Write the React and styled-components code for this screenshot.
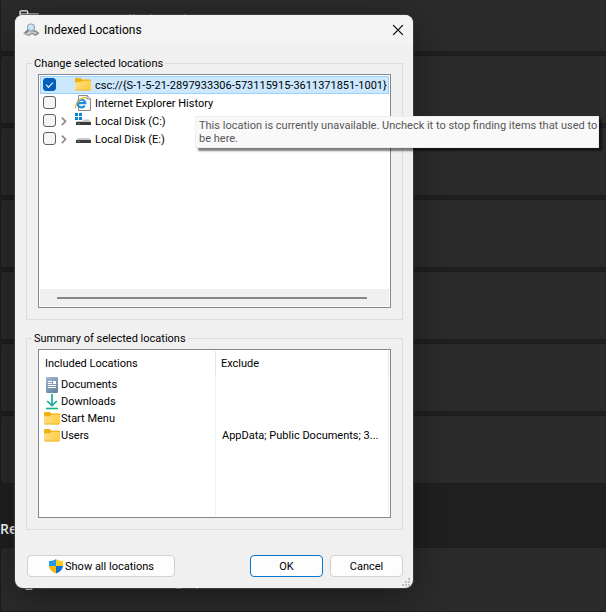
import React from "react"
import styled, { createGlobalStyle, css } from "styled-components"

const GlobalStyle = createGlobalStyle`
  *, *::before, *::after {
    box-sizing: border-box;
  }

  body {
    margin: 0;
    background: #202020;
    font-family: Roboto, "Liberation Sans", sans-serif;
    font-size: 11px;
    line-height: 15px;
    color: #000;
  }
`

/* settings page behind the dialog */

const Desktop = styled.div`
  position: relative;
  height: 100vh;
  min-height: 600px;
  overflow: hidden;
  background: #202020;
`

const SettingsPage = styled.main`
  display: flex;
  flex-direction: column;
  margin: -17px -8px 0 0;
  font-family: "Open Sans", "Noto Sans", sans-serif;
  font-size: 14px;
  line-height: 20px;
  color: #fff;
`

const CardList = styled.div`
  display: flex;
  flex-direction: column;
  gap: 3px;
`

const Card = styled.div`
  display: flex;
  align-items: center;
  gap: 21px;
  height: ${p => (p.$short ? "65px" : "69px")};
  flex: none;
  padding: ${p => (p.$short ? "0" : "4px")} 0 0 18px;
  background: #2b2b2b;
  border: 1px solid #1d1d1d;
  border-radius: 4px;
`

const SectionTitle = styled.h2`
  margin: 35px 0 8px;
  font-size: 14px;
  line-height: 20px;
  font-weight: 600;
`

/* dialog */

const Window = styled.section`
  position: absolute;
  top: 15px;
  left: 15px;
  width: 398px;
  max-width: 100%;
  background: #f0f0f0;
  border-radius: 8px;
  box-shadow: 0 0 0 1px rgba(70, 70, 70, 0.7), 0 8px 36px rgba(0, 0, 0, 0.4);
`

const TitleBar = styled.header`
  display: flex;
  align-items: center;
  gap: 5px;
  height: 30px;
  padding: 0 9px 0 8px;
  background: #f3f3f3;
  border-radius: 8px 8px 0 0;
`

const Title = styled.h1`
  flex: 1;
  margin: 0;
  font-size: 12px;
  line-height: 16px;
  font-weight: 400;
`

const CloseButton = styled.button`
  display: flex;
  padding: 0;
  border: 0;
  background: none;
  color: #000;
`

const Content = styled.div`
  display: flex;
  flex-direction: column;
  gap: 11px;
  padding: 11px 10px 11px 11px;
`

const Group = styled.fieldset`
  min-width: 0;
  margin: 0;
  padding: 3px 11px 11px;
  border: 1px solid #dcdcdc;
`

const Legend = styled.legend`
  margin-left: -6px;
  padding: 0 2px;
`

const ListBox = styled.div`
  display: flex;
  flex-direction: column;
  min-height: ${p => p.$height};
  padding: 1px;
  background: #fff;
  border: 1px solid #828790;
`

const Tree = styled.ul`
  flex: 1;
  margin: 0;
  padding: 0;
  list-style: none;
`

const TreeItem = styled.li`
  display: flex;
  align-items: center;
  height: 18px;
  padding-left: 2px;
  border: 1px solid transparent;
  white-space: nowrap;

  ${p =>
    p.$selected &&
    css`
      background: #cce8ff;
      border-color: #99d1ff;
    `}
`

const Checkbox = styled.input`
  appearance: none;
  display: grid;
  place-items: center;
  width: 13px;
  height: 13px;
  margin: 0 0 1px;
  background: #f5f5f5;
  border: 1px solid #5f5f5f;
  border-radius: 3px;

  &:checked {
    background: #005fb8;
    border-color: #005fb8;
  }

  &:checked::after {
    content: "";
    width: 7px;
    height: 4px;
    border: solid #fff;
    border-width: 0 0 1px 1px;
    transform: translateY(-1px) rotate(-45deg);
  }
`

const Expander = styled.button`
  display: flex;
  justify-content: center;
  width: 15px;
  margin-right: 4px;
  padding: 0;
  border: 0;
  background: none;
`

const ExpanderGap = styled.span`
  width: 19px;
`

const ItemLabel = styled.label`
  display: flex;
  align-items: center;
  gap: 4px;
`

const ScrollTrack = styled.div`
  display: flex;
  align-items: center;
  height: 17px;
  padding: 0 22px 0 17px;
  background: #f0f0f0;
`

const ScrollThumb = styled.div`
  flex: 1;
  height: 2px;
  background: #858585;
`

const Summary = styled.table`
  width: 100%;
  height: 165px;
  table-layout: fixed;
  border-collapse: separate;
  border-spacing: 0;
`

const HeadCell = styled.th`
  width: ${p => p.$width || "auto"};
  height: 25px;
  padding: 0 5px;
  border-right: 1px solid #e5e5e5;
  text-align: left;
  font-weight: 400;
`

const Cell = styled.td`
  height: ${p => (p.$filler ? "auto" : "17px")};
  padding: 0 5px 0 ${p => (p.$first ? "4px" : "6px")};
  border-right: 1px solid #e8f2fc;
  overflow: hidden;
  text-overflow: ellipsis;
  white-space: nowrap;
`

const Location = styled.span`
  display: flex;
  align-items: center;
  gap: 1px;
`

const Footer = styled.footer`
  display: flex;
  gap: 7px;
  margin-top: 14px;
  padding-left: 1px;
`

const Button = styled.button`
  display: flex;
  align-items: center;
  justify-content: center;
  gap: 1px;
  width: ${p => (p.$wide ? "148px" : "73px")};
  height: 22px;
  margin-right: ${p => (p.$wide ? "auto" : "0")};
  padding: 0;
  font: inherit;
  color: #000;
  background: #fdfdfd;
  border: 1px solid ${p => (p.$primary ? "#0078d4" : "#d0d0d0")};
  border-radius: 4px;
`

const Grip = styled.svg`
  position: absolute;
  right: 3px;
  bottom: 2px;
`

const Tooltip = styled.div`
  position: absolute;
  top: 116px;
  left: 195px;
  width: 404px;
  padding: 3px 0 3px 4px;
  line-height: 13px;
  color: #575757;
  background: #f9f9f9;
  border-radius: 1px;
  box-shadow: inset 0 0 0 1px #ececec, 3px 3px 2px rgba(0, 0, 0, 0.5);
`

/* icons */

const Icon = ({ size = 16, children, ...rest }) => (
  <svg width={size} height={size} viewBox="0 0 16 16" fill="none" aria-hidden="true" {...rest}>
    {children}
  </svg>
)

const FolderIcon = () => (
  <Icon>
    <path d="M0 2.200C0 1.400.5 1 1.200 1h4.600l1.400 1.600h7.600c.7 0 1.200.5 1.200 1.200V8H0z" fill="#f0b010" />
    <path d="M0 5.200h6l1.600-1.400h7.400c.6 0 1 .4 1 1v7.500c0 .7-.5 1.200-1.200 1.200H1.200C.5 13.500 0 13 0 12.300z" fill="url(#folderFace)" />
    <path d="M.5 13h15" stroke="#e9b32f" strokeWidth=".8" />
    <defs>
      <linearGradient id="folderFace" x1="0" y1="4" x2="16" y2="14" gradientUnits="userSpaceOnUse">
        <stop stopColor="#ffe08a" />
        <stop offset="1" stopColor="#ffca3a" />
      </linearGradient>
    </defs>
  </Icon>
)

const InternetIcon = () => (
  <Icon>
    <path d="M3.500.5h8.700l3.300 3.300v11.700h-12z" fill="#fcfcfc" stroke="#8a8a8a" />
    <path d="M12 .5V4h3.500" stroke="#8a8a8a" />
    <path d="M9.700 10.600a3.900 3.900 0 1 1 .6-2.500H3" stroke="#1e8fe0" strokeWidth="2.200" />
    <path d="M1.200 13.400C-1 11.500 2.600 5.600 6.600 3.400c2.300-1.300 4.300-1.400 4.500.3" stroke="#f0b41c" strokeWidth="1.100" />
  </Icon>
)

const DiskIcon = ({ windows }) => (
  <Icon>
    {windows && <path d="M0 0h3v3H0zM4 0h3v3H4zM0 4h3v3H0zM4 4h3v3H4z" fill="#0a84d8" />}
    <path d={windows ? "M8 6.500h6l2 2.500H1l1-1h6z" : "M3 7h11l2 2H1z"} fill="#c9c9c9" />
    <rect x="1" y="9" width="15" height="3" rx=".6" fill="#3a3a3a" />
    <rect x="3" y="10" width="1.500" height="1" fill="#35d32f" />
  </Icon>
)

const DocumentIcon = () => (
  <Icon>
    <rect x="2" y="0" width="12" height="16" rx="1.200" fill="url(#docFace)" />
    <path d="M4 4.500h4M4 6.500h4M4 8.500h8M4 10.500h8" stroke="#fff" />
    <rect x="9" y="4" width="3" height="3" fill="#fff" />
    <defs>
      <linearGradient id="docFace" x1="2" y1="0" x2="14" y2="16" gradientUnits="userSpaceOnUse">
        <stop stopColor="#9fb9d3" />
        <stop offset="1" stopColor="#5f7f9f" />
      </linearGradient>
    </defs>
  </Icon>
)

const DownloadIcon = () => (
  <Icon>
    <path d="M8 0v11.500M3.200 7 8 11.600 12.800 7" stroke="#1aab97" strokeWidth="1.700" />
    <path d="M2 14.500h12" stroke="#17b384" strokeWidth="1.600" />
  </Icon>
)

const ShieldIcon = () => (
  <Icon>
    <path d="M8 1C6 2.500 3.500 3 1 3v5h7z" fill="#1f9be8" />
    <path d="M8 1c2 1.500 4.500 2 7 2v5H8z" fill="#ffcc1a" />
    <path d="M1 8c.3 3.500 3 6 7 7.500V8z" fill="#f8b90c" />
    <path d="M15 8c-.3 3.500-3 6-7 7.500V8z" fill="#1273cf" />
  </Icon>
)

const IndexIcon = () => (
  <Icon>
    <path d="M0 11.500 4 8h8l4 2.500v1.300L12.500 14 9 12l-3.500 2z" fill="#8d8d8d" />
    <path d="M1.200 11.300 4.500 9l6 .6 4 1.300-2.300 1.400L9 10.600l-3.500 2.200z" fill="#cfcfcf" />
    <circle cx="8" cy="5.500" r="3.500" fill="#bfe3fb" stroke="#9aa6b0" strokeWidth="1.200" />
    <path d="M6.200 5C6.500 4 7.200 3.600 8 3.500" stroke="#fff" />
    <path d="m5.400 8-2.800 3" stroke="#777" strokeWidth="1.800" />
  </Icon>
)

const CloseIcon = () => (
  <Icon size={12}>
    <path d="m1.500 1.500 13 13m0-13-13 13" stroke="currentColor" strokeWidth="1.600" />
  </Icon>
)

const ChevronIcon = () => (
  <Icon size={10}>
    <path d="m4.500 2.500 6 6-6 6" stroke="#8a8a8a" strokeWidth="2.600" />
  </Icon>
)

const OutlineFolder = () => (
  <Icon size={20}>
    <path d="M.8 13.500v-12c0-.5.400-.8.800-.8h4.500c.5 0 .8.300.8.800v1.700H15.200v10.300zM.8 3.200h6" stroke="#fff" />
  </Icon>
)

const OutlineBulb = () => (
  <Icon size={20}>
    <path d="M5.800 11.500C3 9.500 2.700 7.500 2.700 6a5.300 5.300 0 0 1 10.600 0c0 1.500-.3 3.500-3.100 5.500v3.800H5.800zM5.800 12.500h4.400" stroke="#fff" />
  </Icon>
)

const locations = [
  { name: "csc://{S-1-5-21-2897933306-573115915-3611371851-1001}", icon: <FolderIcon />, checked: true },
  { name: "Internet Explorer History", icon: <InternetIcon /> },
  { name: "Local Disk (C:)", icon: <DiskIcon windows />, expandable: true },
  { name: "Local Disk (E:)", icon: <DiskIcon />, expandable: true },
]

const included = [
  { name: "Documents", icon: <DocumentIcon /> },
  { name: "Downloads", icon: <DownloadIcon /> },
  { name: "Start Menu", icon: <FolderIcon /> },
  { name: "Users", icon: <FolderIcon />, exclude: "AppData; Public Documents; 3..." },
]

const LocationRow = ({ id, item }) => {
  const [checked, setChecked] = React.useState(!!item.checked)

  return (
    <TreeItem $selected={item.checked}>
      <Checkbox type="checkbox" id={id} checked={checked} onChange={e => setChecked(e.target.checked)} />
      {item.expandable ? (
        <Expander type="button" aria-label={`Expand ${item.name}`}>
          <ChevronIcon />
        </Expander>
      ) : (
        <ExpanderGap />
      )}
      <ItemLabel htmlFor={id}>
        {item.icon}
        {item.name}
      </ItemLabel>
    </TreeItem>
  )
}

const IndexedLocations = () => (
  <Window role="dialog" aria-labelledby="dialog-title">
    <TitleBar>
      <IndexIcon />
      <Title id="dialog-title">Indexed Locations</Title>
      <CloseButton type="button" aria-label="Close">
        <CloseIcon />
      </CloseButton>
    </TitleBar>

    <Content>
      <Group>
        <Legend>Change selected locations</Legend>
        <ListBox $height="234px">
          <Tree>
            {locations.map((item, i) => (
              <LocationRow key={item.name} id={`location-${i}`} item={item} />
            ))}
          </Tree>
          <ScrollTrack>
            <ScrollThumb />
          </ScrollTrack>
        </ListBox>
      </Group>

      <Group>
        <Legend>Summary of selected locations</Legend>
        <ListBox $height="169px">
          <Summary>
            <thead>
              <tr>
                <HeadCell $width="176px">Included Locations</HeadCell>
                <HeadCell>Exclude</HeadCell>
              </tr>
            </thead>
            <tbody>
              {included.map(item => (
                <tr key={item.name}>
                  <Cell $first>
                    <Location>
                      {item.icon}
                      {item.name}
                    </Location>
                  </Cell>
                  <Cell>{item.exclude}</Cell>
                </tr>
              ))}
              <tr aria-hidden="true">
                <Cell $filler />
                <Cell $filler />
              </tr>
            </tbody>
          </Summary>
        </ListBox>
      </Group>

      <Footer>
        <Button type="button" $wide>
          <ShieldIcon />
          Show all locations
        </Button>
        <Button type="button" $primary>
          OK
        </Button>
        <Button type="button">Cancel</Button>
      </Footer>
    </Content>

    <Grip width="8" height="8" viewBox="0 0 8 8" fill="#bdbdbd" aria-hidden="true">
      <path d="M6 0h2v2H6zM3 3h2v2H3zM6 3h2v2H6zM0 6h2v2H0zM3 6h2v2H3zM6 6h2v2H6z" />
    </Grip>
  </Window>
)

export default () => (
  <Desktop>
    <GlobalStyle />
    <SettingsPage>
      <CardList>
        <Card>
          <OutlineFolder />
          C:\Users\All\Shared Documents
        </Card>
        <Card />
        <Card />
        <Card />
        <Card />
        <Card />
        <Card />
      </CardList>
      <SectionTitle>Related settings</SectionTitle>
      <Card $short>
        <OutlineBulb />
        Advanced indexing options
      </Card>
    </SettingsPage>

    <IndexedLocations />

    <Tooltip role="tooltip">
      This location is currently unavailable. Uncheck it to stop finding items that used to be here.
    </Tooltip>
  </Desktop>
)
